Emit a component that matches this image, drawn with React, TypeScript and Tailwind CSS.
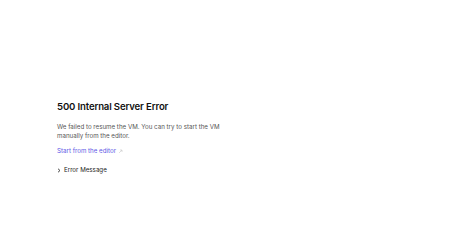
export default function App() {
    return (
        <main className="w-[474px] h-[248px] bg-white font-['Inter',sans-serif] pl-[57px] pt-[101px]">
            <h1 className="text-[9.6px] leading-[12px] font-semibold tracking-[-0.15px] text-[#111] m-0">500 Internal Server Error</h1>
            <p className="mt-[10px] text-[6.2px] leading-[8.5px] text-[#555] w-[168px]">
                We failed to resume the VM. You can try to start the VM manually from the editor.
            </p>
            <a className="mt-[7px] flex items-center gap-[2px] text-[6.2px] leading-[8px] text-[#6159e6]">
                Start from the editor
                <svg width="5" height="5" viewBox="0 0 10 10" fill="none" stroke="#c8c8c8" strokeWidth="1.2">
                    <path d="M2 8 L8 2 M4 2 H8 V6" />
                </svg>
            </a>
            <div className="mt-[11px] flex items-center gap-[3px] text-[6.2px] leading-[8px] text-[#222]">
                <svg width="4" height="5" viewBox="0 0 8 10" fill="none" stroke="#222" strokeWidth="1.6">
                    <path d="M2 1.5 L6 5 L2 8.5" />
                </svg>
                Error Message
            </div>
        </main>
    )
}
